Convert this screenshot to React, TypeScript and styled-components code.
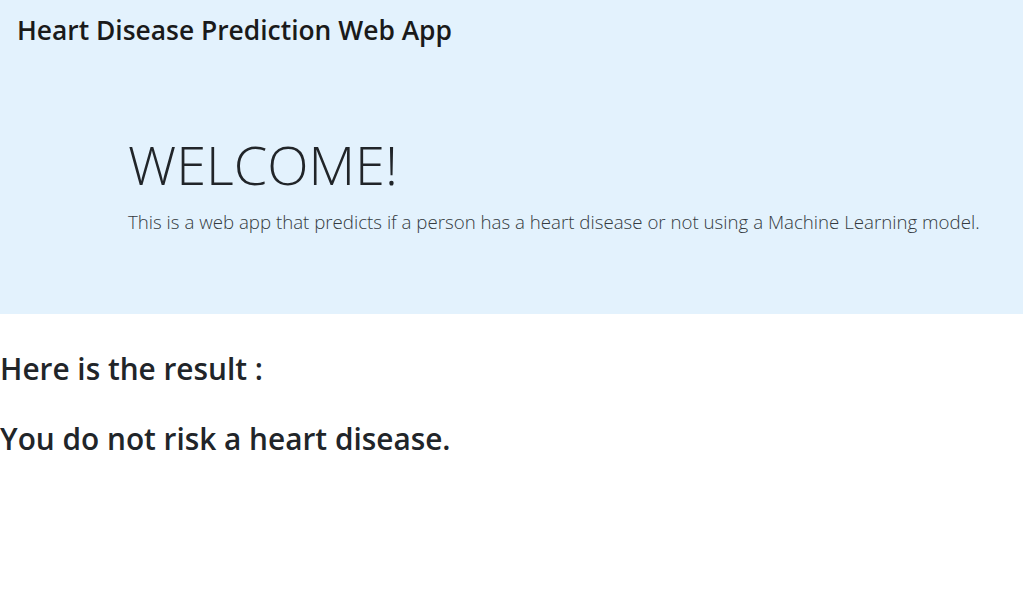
import React from 'react'
import styled, { createGlobalStyle } from 'styled-components'

const GlobalStyle = createGlobalStyle`
  body {
    margin: 0;
    background: #ffffff;
    font-family: 'Open Sans', 'Noto Sans', sans-serif;
    color: #212529;
  }
`;

const Top = styled.div`
  background-color: #e3f2fd;
  height: 314px;
  display: flex;
  flex-direction: column;
`;

const Navbar = styled.nav`
  padding: 13px 17px;
  display: flex;
  align-items: center;
`;

const Brand = styled.div`
  font-size: 26.4px;
  font-weight: 600;
  color: #1a1a1a;
  line-height: 34px;
`;

const Jumbotron = styled.section`
  padding: 72px 0 0 128px;
`;

const Display = styled.h1`
  margin: 0;
  font-size: 54px;
  font-weight: 300;
  line-height: 1.2;
  color: #212529;
`;

const Lead = styled.p`
  margin: 12px 0 0;
  font-size: 18.7px;
  font-weight: 300;
  color: #343a40;
`;

const Result = styled.h3`
  margin: 37px 0 0;
  font-size: 29.8px;
  font-weight: 600;
  line-height: 1.2;
  color: #212529;
  & + & {
    margin-top: 34px;
  }
`;

export default function App() {
  return (
    <>
      <GlobalStyle />
      <Top>
        <Navbar>
          <Brand>Heart Disease Prediction Web App</Brand>
        </Navbar>
        <Jumbotron>
          <Display>WELCOME!</Display>
          <Lead>
            This is a web app that predicts if a person has a heart disease or not using a Machine Learning model.
          </Lead>
        </Jumbotron>
      </Top>
      <Result>Here is the result :</Result>
      <Result>You do not risk a heart disease.</Result>
    </>
  )
}
